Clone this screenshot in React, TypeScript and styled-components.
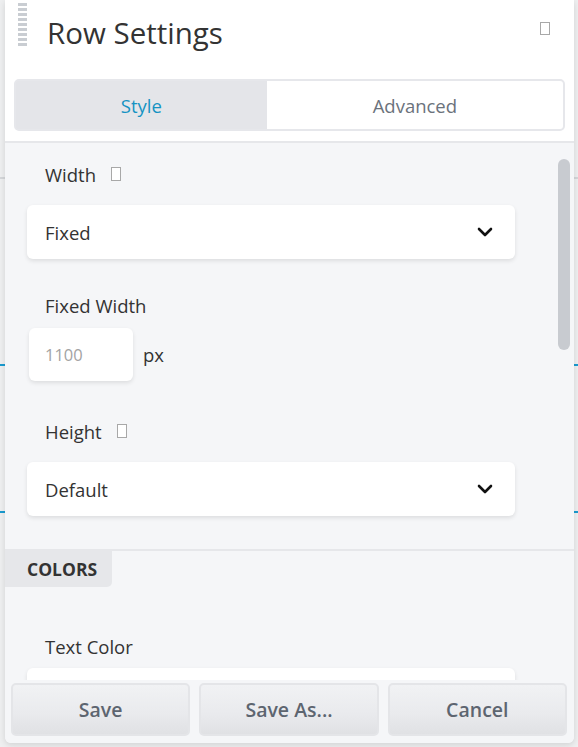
import React from "react";
import styled, { createGlobalStyle } from "styled-components";

const GlobalStyle = createGlobalStyle`
  * { box-sizing: border-box; }
  html, body {
    margin: 0;
    padding: 0;
    background: #eeeff0;
    font-family: "Open Sans", "Noto Sans", sans-serif;
  }
`;

const Page = styled.div`
  position: relative;
  width: 578px;
  height: 747px;
  overflow: hidden;
  padding-left: 5px;
  background: #eeeff0;
`;

const Guide = styled.div<{ $top: number; $color: string }>`
  position: absolute;
  left: 0;
  right: 0;
  top: ${(p) => p.$top}px;
  height: 2px;
  background: ${(p) => p.$color};
`;

const Panel = styled.div`
  position: relative;
  width: 569px;
  height: 743px;
  display: flex;
  flex-direction: column;
  background: #f5f6f8;
  border-radius: 0 0 6px 6px;
  box-shadow: 0 2px 6px rgba(0, 0, 0, 0.12);
  overflow: hidden;
`;

const Header = styled.div`
  background: #fff;
  border-bottom: 2px solid #e6e7ea;
  padding: 0 9px 10px 9px;
`;

const TitleRow = styled.div`
  position: relative;
  height: 79px;
  display: flex;
  align-items: flex-start;
`;

const Grip = styled.div`
  width: 9px;
  height: 45px;
  margin: 3px 0 0 4px;
  background: repeating-linear-gradient(
    to bottom,
    #c9cdd2 0 3px,
    transparent 3px 5px
  );
`;

const Title = styled.h1`
  margin: 12px 0 0 20px;
  font-size: 29.5px;
  font-weight: 400;
  line-height: 42px;
  color: #333;
`;

const Tofu = styled.span<{ $size?: number }>`
  display: inline-block;
  width: ${(p) => (p.$size ?? 10)}px;
  height: ${(p) => (p.$size ?? 10) * 1.35}px;
  border: 1px solid #a8a8a8;
  background: #fff;
`;

const Close = styled.div`
  position: absolute;
  top: 18px;
  right: 15px;
`;

const Tabs = styled.div`
  display: flex;
  height: 52px;
  border: 2px solid #e6e7eb;
  border-radius: 5px;
  background: #e4e5e9;
  overflow: hidden;
`;

const Tab = styled.div<{ $active?: boolean; $grow: number }>`
  flex: ${(p) => p.$grow} 1 0;
  display: flex;
  align-items: center;
  justify-content: center;
  font-size: 18.5px;
  color: ${(p) => (p.$active ? "#1593c3" : "#6b727c")};
  background: ${(p) => (p.$active ? "#e4e5e9" : "#fff")};
`;

const Content = styled.div`
  position: relative;
  flex: 1;
  overflow: hidden;
  padding-top: 19px;
`;

const Scrollbar = styled.div`
  position: absolute;
  top: 16px;
  right: 4px;
  width: 12px;
  height: 191px;
  border-radius: 6px;
  background: #c8cbd0;
`;

const Field = styled.div<{ $gap: number; $after: number }>`
  padding-left: 22px;
  margin-bottom: ${(p) => p.$after}px;
  & > label {
    display: flex;
    align-items: center;
    gap: 15px;
    padding-left: 18px;
    height: 24px;
    margin-bottom: ${(p) => p.$gap}px;
    font-size: 18.5px;
    color: #333;
  }
`;

const Select = styled.div`
  width: 488px;
  height: 54px;
  display: flex;
  align-items: center;
  justify-content: space-between;
  padding: 0 22px 0 18px;
  background: #fff;
  border-radius: 6px;
  box-shadow: 0 2px 4px rgba(0, 0, 0, 0.1);
  font-size: 18.5px;
  color: #333;
`;

const UnitRow = styled.div`
  display: flex;
  align-items: center;
  gap: 10px;
  padding-left: 2px;
  font-size: 18.5px;
  color: #333;
`;

const NumberInput = styled.div`
  width: 104px;
  height: 53px;
  display: flex;
  align-items: center;
  padding-left: 16px;
  background: #fff;
  border-radius: 6px;
  box-shadow: 0 2px 4px rgba(0, 0, 0, 0.1);
  font-size: 16.5px;
  color: #a3a3a3;
`;

const Section = styled.div`
  border-top: 2px solid #e6e7ea;
`;

const SectionTitle = styled.div`
  display: inline-flex;
  align-items: center;
  height: 36px;
  padding: 0 15px 0 22px;
  background: #e6e7ea;
  border-radius: 0 0 5px 0;
  font-size: 17.5px;
  font-weight: 700;
  color: #333;
  margin-bottom: 47px;
`;

const ColorInput = styled.div`
  width: 488px;
  height: 54px;
  background: #fff;
  border-radius: 6px;
  box-shadow: 0 2px 4px rgba(0, 0, 0, 0.1);
`;

const Footer = styled.div`
  display: flex;
  gap: 9px;
  padding: 3px 7px 7px 6px;
  background: #f5f6f8;
`;

const Button = styled.div`
  flex: 1;
  height: 53px;
  display: flex;
  align-items: center;
  justify-content: center;
  border: 2px solid #e4e5e8;
  border-radius: 5px;
  background: linear-gradient(to bottom, #f1f2f4 0%, #e9eaed 60%, #e0e1e4 100%);
  font-size: 19.5px;
  font-weight: 600;
  color: #5d6570;
`;

const Chevron = () => (
  <svg width="16" height="10" viewBox="0 0 16 10">
    <polyline
      points="2,2 8,8 14,2"
      fill="none"
      stroke="#111"
      strokeWidth="2.6"
      strokeLinecap="round"
      strokeLinejoin="round"
    />
  </svg>
);

export default function App() {
  return (
    <>
      <GlobalStyle />
      <Page>
        <Guide $top={177} $color="#d4d6d9" />
        <Guide $top={364} $color="#1a9bd0" />
        <Guide $top={511} $color="#1a9bd0" />
        <Panel>
          <Header>
            <TitleRow>
              <Grip />
              <Title>Row Settings</Title>
              <Close>
                <Tofu $size={10} />
              </Close>
            </TitleRow>
            <Tabs>
              <Tab $active $grow={253}>
                Style
              </Tab>
              <Tab $grow={299}>Advanced</Tab>
            </Tabs>
          </Header>
          <Content>
            <Scrollbar />
            <Field $gap={19} $after={34}>
              <label>
                Width <Tofu />
              </label>
              <Select>
                Fixed
                <Chevron />
              </Select>
            </Field>
            <Field $gap={11} $after={38}>
              <label>Fixed Width</label>
              <UnitRow>
                <NumberInput>1100</NumberInput>
                px
              </UnitRow>
            </Field>
            <Field $gap={19} $after={33}>
              <label>
                Height <Tofu />
              </label>
              <Select>
                Default
                <Chevron />
              </Select>
            </Field>
            <Section>
              <SectionTitle>COLORS</SectionTitle>
              <Field $gap={10} $after={0}>
                <label>Text Color</label>
                <ColorInput />
              </Field>
            </Section>
          </Content>
          <Footer>
            <Button>Save</Button>
            <Button>Save As...</Button>
            <Button>Cancel</Button>
          </Footer>
        </Panel>
      </Page>
    </>
  );
}
